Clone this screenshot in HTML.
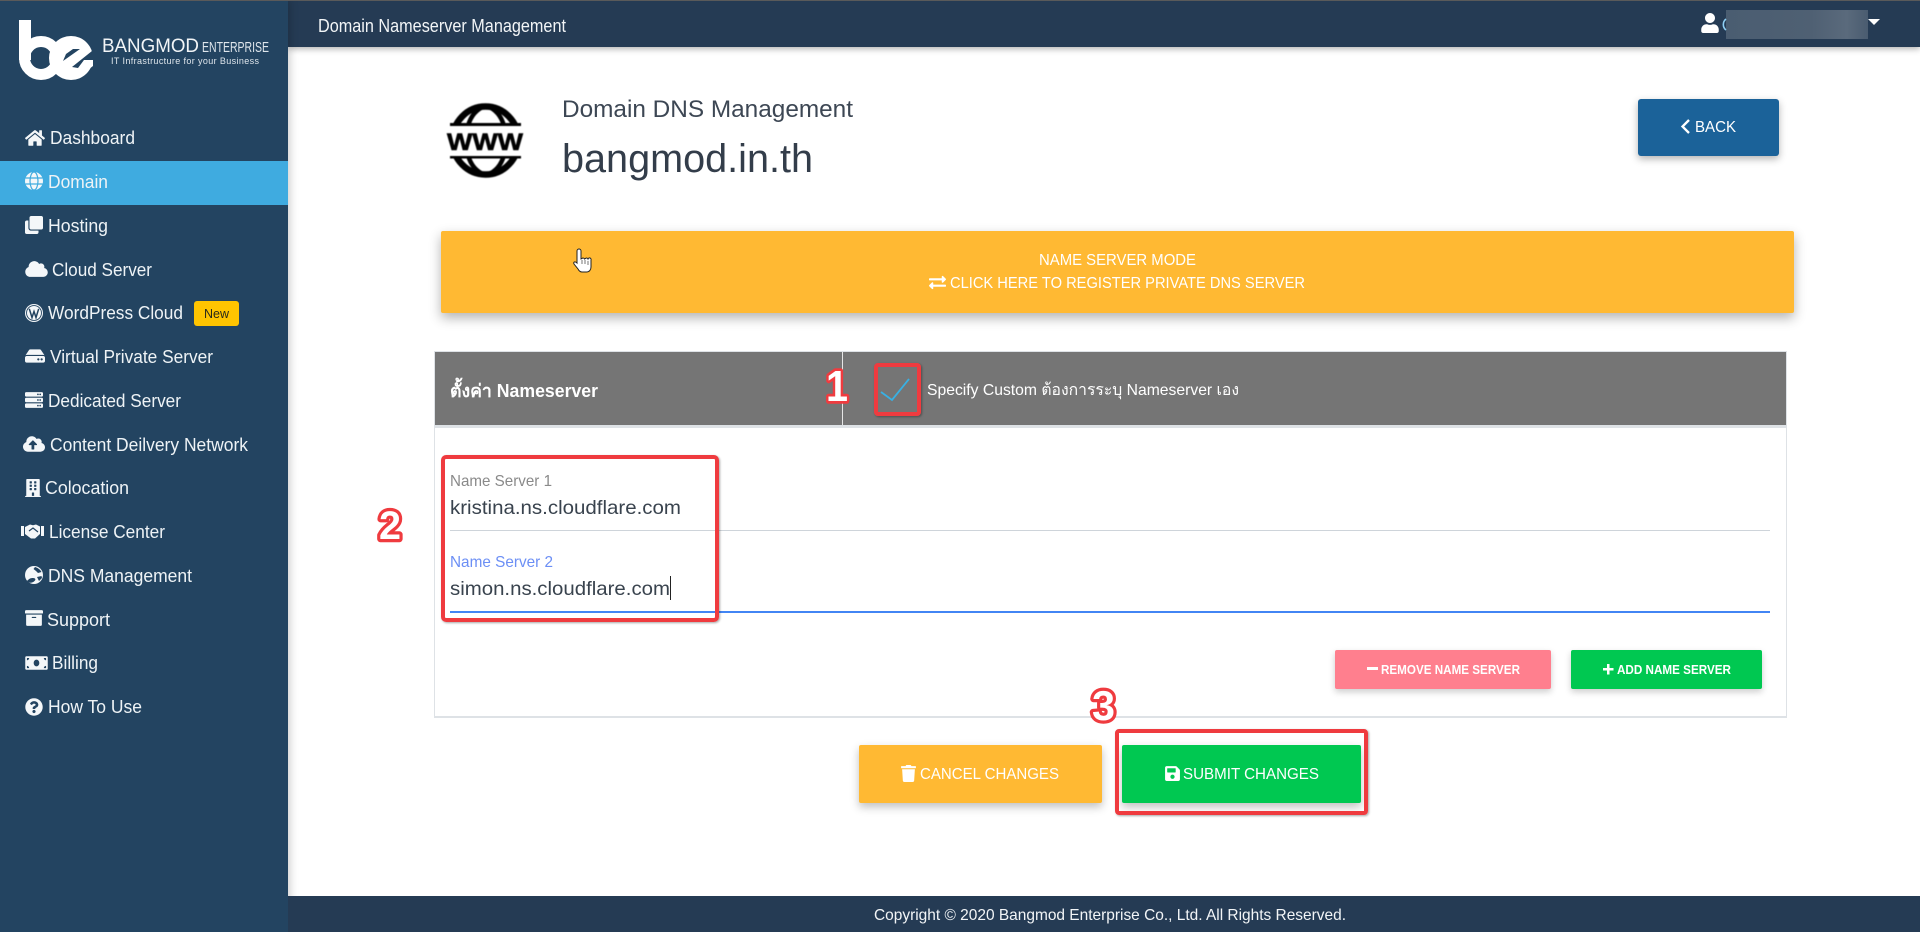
<!DOCTYPE html>
<html>
<head>
<meta charset="utf-8">
<title>Domain Nameserver Management</title>
<style>
html,body{margin:0;padding:0;width:1920px;height:932px;overflow:hidden;background:#fff}
.b{position:absolute;box-sizing:border-box}
svg.o{position:absolute;left:0;top:0;width:1920px;height:932px}
text{font-family:"Liberation Sans","Noto Sans CJK SC",sans-serif}
.n text{font-size:18px;fill:#eef3f6}
.r{border:4px solid #ef3b3f;box-shadow:1px 1px 2px rgba(0,0,0,.35)}
</style>
</head>
<body>
<div class="b" style="left:288px;top:0;width:1632px;height:47px;background:#253b54;box-shadow:0 2px 6px rgba(0,0,0,.3)"></div>
<div class="b" style="left:0;top:0;width:288px;height:932px;background:#234461;box-shadow:2px 0 8px rgba(0,0,0,.2)"></div>
<div class="b" style="left:0;top:0;width:1920px;height:1px;background:#5a5a5a"></div>
<div class="b" style="left:0;top:161px;width:288px;height:44px;background:#3fabe0"></div>
<div class="b" style="left:194px;top:301px;width:45px;height:25px;border-radius:3px;background:#ffc400"></div>
<div class="b" style="left:1726px;top:10px;width:142px;height:29px;background:linear-gradient(90deg,#4a5d71,#4f6073 60%,#5a6a7c 85%,#4a5c70)"></div>

<div class="b" style="left:1638px;top:99px;width:141px;height:57px;background:#1b6299;border-radius:3px;box-shadow:0 3px 8px rgba(0,0,0,.3)"></div>
<div class="b" style="left:441px;top:231px;width:1353px;height:82px;background:#ffb933;border-radius:2px;box-shadow:0 5px 12px rgba(0,0,0,.3)"></div>

<div class="b" style="left:434px;top:351px;width:1353px;height:367px;border:1px solid #dee2e6;border-bottom-width:2px"></div>
<div class="b" style="left:435px;top:352px;width:1351px;height:73px;background:#757575"></div>
<div class="b" style="left:435px;top:425px;width:1351px;height:3px;background:#dee2e6"></div>
<div class="b" style="left:842px;top:352px;width:1px;height:73px;background:#e6e6e6"></div>

<div class="b" style="left:450px;top:530px;width:1320px;height:1px;background:#ced4da"></div>
<div class="b" style="left:450px;top:611px;width:1320px;height:2px;background:#4285f4"></div>
<div class="b" style="left:670px;top:576px;width:1px;height:24px;background:#222"></div>

<div class="b" style="left:1335px;top:650px;width:216px;height:39px;background:#ff7f8e;border-radius:2px;box-shadow:0 3px 7px rgba(0,0,0,.2)"></div>
<div class="b" style="left:1571px;top:650px;width:191px;height:39px;background:#00c851;border-radius:2px;box-shadow:0 3px 7px rgba(0,0,0,.2)"></div>
<div class="b" style="left:859px;top:745px;width:243px;height:58px;background:#ffb933;border-radius:2px;box-shadow:0 4px 9px rgba(0,0,0,.25)"></div>
<div class="b" style="left:1122px;top:745px;width:239px;height:58px;background:#00c851;border-radius:2px;box-shadow:0 4px 9px rgba(0,0,0,.25)"></div>

<div class="b" style="left:288px;top:896px;width:1632px;height:36px;background:#253b54"></div>

<div class="b r" style="left:874px;top:363px;width:47px;height:53px;border-radius:4px"></div>
<div class="b r" style="left:441px;top:455px;width:278px;height:167px;border-radius:5px"></div>
<div class="b r" style="left:1115px;top:729px;width:253px;height:86px;border-radius:4px"></div>

<svg class="o" viewBox="0 0 1920 932" xmlns="http://www.w3.org/2000/svg">
<defs>
<clipPath id="gc"><rect x="440" y="95" width="90" height="31"/><rect x="440" y="156" width="90" height="30"/></clipPath>
<filter id="bl" x="-10%" y="-10%" width="120%" height="120%"><feGaussianBlur stdDeviation="0.6"/></filter>
</defs>
<!-- logo -->
<g>
<rect x="19" y="20" width="12" height="40" fill="#fff"/>
<circle cx="41" cy="58" r="16.5" fill="none" stroke="#fff" stroke-width="11"/>
<circle cx="71" cy="58" r="22" fill="#fff"/>
<polygon points="63,61 66,54 73,49 80,49" fill="#234461"/>
<polygon points="72,67 92,51 100,51 100,60 84,60 78,68" fill="#234461"/>
<polygon points="84,60 93,60 93,66 80,76" fill="#fff"/>
</g>
<text x="102" y="52" font-size="19.500" fill="#f2f5f7" textLength="97" lengthAdjust="spacingAndGlyphs">BANGMOD</text>
<text x="202" y="52" font-size="14.500" fill="#dfe6ec" textLength="67" lengthAdjust="spacingAndGlyphs">ENTERPRISE</text>
<text x="111" y="64" font-size="9" fill="#dfe6ec" textLength="148" lengthAdjust="spacing">IT Infrastructure for your Business</text>

<!-- nav -->
<g class="n">
<text x="50" y="144" textLength="85" lengthAdjust="spacingAndGlyphs">Dashboard</text>
<text x="48" y="188" textLength="60" lengthAdjust="spacingAndGlyphs">Domain</text>
<text x="48" y="232" textLength="60" lengthAdjust="spacingAndGlyphs">Hosting</text>
<text x="52" y="276" textLength="100" lengthAdjust="spacingAndGlyphs">Cloud Server</text>
<text x="48" y="319" textLength="135" lengthAdjust="spacingAndGlyphs">WordPress Cloud</text>
<text x="50" y="363" textLength="163" lengthAdjust="spacingAndGlyphs">Virtual Private Server</text>
<text x="48" y="407" textLength="133" lengthAdjust="spacingAndGlyphs">Dedicated Server</text>
<text x="50" y="451" textLength="198" lengthAdjust="spacingAndGlyphs">Content Deilvery Network</text>
<text x="45" y="494" textLength="84" lengthAdjust="spacingAndGlyphs">Colocation</text>
<text x="49" y="538" textLength="116" lengthAdjust="spacingAndGlyphs">License Center</text>
<text x="48" y="582" textLength="144" lengthAdjust="spacingAndGlyphs">DNS Management</text>
<text x="47" y="626" textLength="63" lengthAdjust="spacingAndGlyphs">Support</text>
<text x="52" y="669" textLength="46" lengthAdjust="spacingAndGlyphs">Billing</text>
<text x="48" y="713" textLength="94" lengthAdjust="spacingAndGlyphs">How To Use</text>
</g>
<text x="204" y="318" font-size="13" fill="#2a2a1a" textLength="25" lengthAdjust="spacingAndGlyphs">New</text>

<!-- nav icons -->
<g fill="#f4f7f9">
<svg x="25" y="129" width="20" height="18" viewBox="0 0 576 512"><path d="M280.37 148.26L96 300.11V464a16 16 0 0 0 16 16l112.06-.29a16 16 0 0 0 15.92-16V368a16 16 0 0 1 16-16h64a16 16 0 0 1 16 16v95.64a16 16 0 0 0 16 16.05L464 480a16 16 0 0 0 16-16V300L295.67 148.26a12.19 12.19 0 0 0-15.3 0zM571.6 251.47L488 182.56V44.05a12 12 0 0 0-12-12h-56a12 12 0 0 0-12 12v72.61L318.47 43a48 48 0 0 0-61 0L4.34 251.47a12 12 0 0 0-1.6 16.9l25.5 31A12 12 0 0 0 45.15 301l235.22-193.74a12.19 12.19 0 0 1 15.3 0L530.9 301a12 12 0 0 0 16.9-1.6l25.5-31a12 12 0 0 0-1.7-16.93z"/></svg>
<g>
<circle cx="34" cy="181" r="9"/>
<g fill="none" stroke="#3fabe0" stroke-width="1.200"><ellipse cx="34" cy="181" rx="4" ry="9"/><path d="M25.500 178h17M25.500 184h17"/></g>
</g>
<svg x="25" y="216" width="18" height="18" viewBox="0 0 512 512"><path d="M464 0c26.51 0 48 21.49 48 48v288c0 26.51-21.49 48-48 48H176c-26.51 0-48-21.49-48-48V48c0-26.51 21.49-48 48-48h288M176 416c-44.112 0-80-35.888-80-80V128H48c-26.51 0-48 21.49-48 48v288c0 26.51 21.49 48 48 48h288c26.51 0 48-21.49 48-48v-48H176z"/></svg>
<svg x="25" y="260" width="23" height="18" viewBox="0 0 640 512"><path d="M537.6 226.6c4.1-10.7 6.4-22.4 6.4-34.6 0-53-43-96-96-96-19.7 0-38.1 6-53.3 16.2C367 64.200 315.3 32 256 32c-88.4 0-160 71.6-160 160 0 2.7.1 5.4.2 8.1C40.2 219.8 0 273.2 0 336c0 79.5 64.5 144 144 144h368c70.7 0 128-57.3 128-128 0-61.9-44-113.6-102.4-125.4z"/></svg>
<g>
<circle cx="34" cy="313" r="9"/>
<circle cx="34" cy="313" r="7.900" fill="#234461"/>
<circle cx="34" cy="313" r="7"/>
<path d="M29.300 308.800l2.700 8.700 2-6 2 6 2.700-8.700" fill="none" stroke="#234461" stroke-width="1.500"/>
</g>
<svg x="25" y="347" width="20" height="18" viewBox="0 0 576 512"><path d="M576 304v96c0 26.51-21.49 48-48 48H48c-26.51 0-48-21.49-48-48v-96c0-26.51 21.49-48 48-48h480c26.51 0 48 21.49 48 48zm-48-80a79.557 79.557 0 0 1 30.777 6.165L462.25 85.374A48.003 48.003 0 0 0 422.311 64H153.689a48 48 0 0 0-39.938 21.374L17.223 230.165A79.557 79.557 0 0 1 48 224h480zm-48 96c-17.673 0-32 14.327-32 32s14.327 32 32 32 32-14.327 32-32-14.327-32-32-32zm-96 0c-17.673 0-32 14.327-32 32s14.327 32 32 32 32-14.327 32-32-14.327-32-32-32z"/></svg>
<svg x="25" y="391" width="18" height="18" viewBox="0 0 512 512"><path d="M480 160H32c-17.673 0-32-14.327-32-32V64c0-17.673 14.327-32 32-32h448c17.673 0 32 14.327 32 32v64c0 17.673-14.327 32-32 32zm-48-88c-13.255 0-24 10.745-24 24s10.745 24 24 24 24-10.745 24-24-10.745-24-24-24zm-64 0c-13.255 0-24 10.745-24 24s10.745 24 24 24 24-10.745 24-24-10.745-24-24-24zm112 248H32c-17.673 0-32-14.327-32-32v-64c0-17.673 14.327-32 32-32h448c17.673 0 32 14.327 32 32v64c0 17.673-14.327 32-32 32zm-48-88c-13.255 0-24 10.745-24 24s10.745 24 24 24 24-10.745 24-24-10.745-24-24-24zm-64 0c-13.255 0-24 10.745-24 24s10.745 24 24 24 24-10.745 24-24-10.745-24-24-24zm112 248H32c-17.673 0-32-14.327-32-32v-64c0-17.673 14.327-32 32-32h448c17.673 0 32 14.327 32 32v64c0 17.673-14.327 32-32 32zm-48-88c-13.255 0-24 10.745-24 24s10.745 24 24 24 24-10.745 24-24-10.745-24-24-24zm-64 0c-13.255 0-24 10.745-24 24s10.745 24 24 24 24-10.745 24-24-10.745-24-24-24z"/></svg>
<svg x="23" y="435" width="22" height="18" viewBox="0 0 640 512"><path d="M537.6 226.6c4.1-10.7 6.4-22.4 6.4-34.6 0-53-43-96-96-96-19.7 0-38.1 6-53.3 16.2C367 64.2 315.3 32 256 32c-88.4 0-160 71.6-160 160 0 2.7.1 5.4.2 8.1C40.2 219.8 0 273.2 0 336c0 79.5 64.5 144 144 144h368c70.7 0 128-57.3 128-128 0-61.9-44-113.6-102.4-125.4zM393.4 288H328v112c0 8.8-7.2 16-16 16h-48c-8.8 0-16-7.2-16-16V288h-65.4c-14.3 0-21.4-17.2-11.3-27.3l105.4-105.4c6.2-6.2 16.4-6.2 22.6 0l105.4 105.4c10.1 10.1 2.9 27.3-11.3 27.3z"/></svg>
<svg x="25" y="479" width="16" height="18" viewBox="0 0 448 512"><path d="M436 480h-20V24c0-13.255-10.745-24-24-24H56C42.745 0 32 10.745 32 24v456H12c-6.627 0-12 5.373-12 12v20h448v-20c0-6.627-5.373-12-12-12zM128 76c0-6.627 5.373-12 12-12h40c6.627 0 12 5.373 12 12v40c0 6.627-5.373 12-12 12h-40c-6.627 0-12-5.373-12-12V76zm0 96c0-6.627 5.373-12 12-12h40c6.627 0 12 5.373 12 12v40c0 6.627-5.373 12-12 12h-40c-6.627 0-12-5.373-12-12v-40zm52 148h-40c-6.627 0-12-5.373-12-12v-40c0-6.627 5.373-12 12-12h40c6.627 0 12 5.373 12 12v40c0 6.627-5.373 12-12 12zm76 160h-64v-84c0-6.627 5.373-12 12-12h40c6.627 0 12 5.373 12 12v84zm64-172c0 6.627-5.373 12-12 12h-40c-6.627 0-12-5.373-12-12v-40c0-6.627 5.373-12 12-12h40c6.627 0 12 5.373 12 12v40zm0-96c0 6.627-5.373 12-12 12h-40c-6.627 0-12-5.373-12-12v-40c0-6.627 5.373-12 12-12h40c6.627 0 12 5.373 12 12v40zm0-96c0 6.627-5.373 12-12 12h-40c-6.627 0-12-5.373-12-12V76c0-6.627 5.373-12 12-12h40c6.627 0 12 5.373 12 12v40z"/></svg>
<g>
<rect x="21" y="526" width="3" height="10"/><rect x="41" y="526" width="3" height="10"/>
<path d="M25 527l5-2.500 3 .8 3-.8 4 2v7.500l-5 4.500h-4l-6-4.500z"/>
<path d="M29 531l4-3 5 4" fill="none" stroke="#234461" stroke-width="1.200"/>
</g>
<g>
<circle cx="34" cy="575" r="9"/>
<path d="M27 581c2-2 3-3 6-3s3 2 1 3.500-5 2-7-.5zM35 567c2 .5 5 2 6.500 5l-3.500 1-2-2-2.500-2zM37 577l4.500-1 .5 2-3 3z" fill="#234461"/>
</g>
<svg x="25" y="609" width="18" height="18" viewBox="0 0 512 512"><path d="M32 448c0 17.7 14.3 32 32 32h384c17.7 0 32-14.3 32-32V160H32v288zm160-212c0-6.6 5.4-12 12-12h104c6.6 0 12 5.4 12 12v8c0 6.6-5.4 12-12 12H204c-6.6 0-12-5.4-12-12v-8zM480 32H32C14.3 32 0 46.3 0 64v48c0 8.8 7.2 16 16 16h480c8.8 0 16-7.2 16-16V64c0-17.7-14.3-32-32-32z"/></svg>
<svg x="25" y="654" width="23" height="18" viewBox="0 0 640 512"><path d="M608 64H32C14.33 64 0 78.33 0 96v320c0 17.67 14.33 32 32 32h576c17.67 0 32-14.33 32-32V96c0-17.67-14.33-32-32-32zM48 400v-64c35.35 0 64 28.65 64 64H48zm0-224v-64h64c0 35.35-28.65 64-64 64zm272 176c-44.19 0-80-42.99-80-96 0-53.02 35.82-96 80-96s80 42.98 80 96c0 53.03-35.83 96-80 96zm272 48h-64c0-35.35 28.65-64 64-64v64zm0-224c-35.35 0-64-28.65-64-64h64v64z"/></svg>
<svg x="25" y="698" width="18" height="18" viewBox="0 0 512 512"><path d="M504 256c0 136.997-111.043 248-248 248S8 392.997 8 256C8 119.083 119.043 8 256 8s248 111.083 248 248zM262.655 90c-54.497 0-89.255 22.957-116.549 63.758-3.536 5.286-2.353 12.415 2.715 16.258l34.699 26.31c5.205 3.947 12.621 3.008 16.665-2.122 17.864-22.658 30.113-35.797 57.303-35.797 20.429 0 45.698 13.148 45.698 32.958 0 14.976-12.363 22.667-32.534 33.976C247.128 238.528 216 254.941 216 296v4c0 6.627 5.373 12 12 12h56c6.627 0 12-5.373 12-12v-1.333c0-28.462 83.186-29.647 83.186-106.667 0-58.002-60.165-102-116.531-102zM256 338c-25.365 0-46 20.635-46 46 0 25.364 20.635 46 46 46s46-20.636 46-46c0-25.365-20.635-46-46-46z"/></svg>
</g>

<!-- topbar -->
<text x="318" y="32" font-size="18" fill="#f2f5f7" textLength="248" lengthAdjust="spacingAndGlyphs">Domain Nameserver Management</text>
<svg x="1701" y="13" width="18" height="20" viewBox="0 0 448 512" fill="#fff"><path d="M224 256c70.7 0 128-57.3 128-128S294.7 0 224 0 96 57.3 96 128s57.3 128 128 128zm89.6 32h-16.7c-22.2 10.2-46.9 16-72.9 16s-50.6-5.800-72.900-16h-16.700C60.200 288 0 348.200 0 422.400V464c0 26.500 21.500 48 48 48h352c26.500 0 48-21.500 48-48v-41.600c0-74.200-60.200-134.400-134.400-134.400z"/></svg>
<polygon points="1868,19 1880,19 1874,25" fill="#fff"/>
<path d="M1726 19a7 7 0 0 0 0 11" fill="none" stroke="#8fd0f5" stroke-width="1.600"/>

<!-- www icon -->
<g filter="url(#bl)">
<g clip-path="url(#gc)">
<ellipse cx="485.500" cy="140.500" rx="33" ry="34" fill="none" stroke="#000" stroke-width="6.500"/>
<path d="M468 126Q472 111 485 106M504 126Q500 111 487 106M468 155Q472 170 485 175M504 155Q500 170 487 175" fill="none" stroke="#000" stroke-width="4.500"/>
<path d="M450 124.500H521M450 157H521" fill="none" stroke="#000" stroke-width="3"/>
</g>
<text x="447" y="150" font-size="24" font-weight="700" fill="#000" stroke="#000" stroke-width=".6" textLength="76" lengthAdjust="spacingAndGlyphs">WWW</text>
</g>

<!-- titles -->
<text x="562" y="117" font-size="24" fill="#3d4754" textLength="291" lengthAdjust="spacingAndGlyphs">Domain DNS Management</text>
<text x="562" y="172" font-size="40" fill="#333d4a" textLength="251" lengthAdjust="spacingAndGlyphs">bangmod.in.th</text>

<!-- back -->
<path d="M1689 120l-6.500 6.500 6.500 6.500" fill="none" stroke="#fff" stroke-width="2.300"/>
<text x="1695" y="132" font-size="16" fill="#fff" textLength="41" lengthAdjust="spacingAndGlyphs">BACK</text>

<!-- banner -->
<text x="1039" y="265" font-size="15.500" fill="#fff" textLength="157" lengthAdjust="spacingAndGlyphs">NAME SERVER MODE</text>
<svg x="929" y="274" width="17" height="17" viewBox="0 0 512 512" fill="#fff"><path d="M0 168v-16c0-13.255 10.745-24 24-24h360V80c0-21.367 25.899-32.042 40.971-16.971l80 80c9.372 9.373 9.372 24.569 0 33.941l-80 80C409.956 271.982 384 261.456 384 240v-48H24c-13.255 0-24-10.745-24-24zm488 152H128v-48c0-21.314-25.862-32.080-40.971-16.971l-80 80c-9.372 9.373-9.372 24.569 0 33.941l80 80C102.057 463.997 128 453.437 128 432v-48h360c13.255 0 24-10.745 24-24v-16c0-13.255-10.745-24-24-24z"/></svg>
<text x="950" y="288" font-size="15.500" fill="#fff" textLength="355" lengthAdjust="spacingAndGlyphs">CLICK HERE TO REGISTER PRIVATE DNS SERVER</text>

<!-- cursor -->
<g transform="translate(-4 0)">
<path d="M581 262v-11a2 2 0 0 1 4 0v8l1-.5a1.500 1.500 0 0 1 2.500 .5l1-.5a1.500 1.500 0 0 1 2.500 .5a1.500 1.500 0 0 1 3 1v7c0 3-2 5-4 5h-5c-2 0-3-1-4-3l-4-5c-1-2 1-3 3-1z" fill="#fff" stroke="#222" stroke-width="1"/>
<path d="M586 260v4M589 260v4M592 261v4" stroke="#555" stroke-width=".8" fill="none"/>
</g>

<!-- table header -->
<text x="450" y="397" font-size="18" font-weight="700" fill="#fff" textLength="148" lengthAdjust="spacingAndGlyphs">ตั้งค่า Nameserver</text>
<text x="927" y="395" font-size="16" fill="#fff" textLength="312" lengthAdjust="spacingAndGlyphs">Specify Custom ต้องการระบุ Nameserver เอง</text>
<path d="M881 392l11 8 17-21" fill="none" stroke="#38b0e3" stroke-width="1.800"/>

<!-- form -->
<text x="450" y="486" font-size="16" fill="#8a8a8a" textLength="102" lengthAdjust="spacingAndGlyphs">Name Server 1</text>
<text x="450" y="514" font-size="19.500" fill="#39434e" textLength="231" lengthAdjust="spacingAndGlyphs">kristina.ns.cloudflare.com</text>
<text x="450" y="567" font-size="16" fill="#6c8ff5" textLength="103" lengthAdjust="spacingAndGlyphs">Name Server 2</text>
<text x="450" y="595" font-size="19.500" fill="#39434e" textLength="220" lengthAdjust="spacingAndGlyphs">simon.ns.cloudflare.com</text>

<!-- buttons -->
<rect x="1367" y="667" width="11" height="3" fill="#fff"/>
<text x="1381" y="674" font-size="12.500" font-weight="700" fill="#fff" textLength="139" lengthAdjust="spacingAndGlyphs">REMOVE NAME SERVER</text>
<path d="M1607 664h2.500v4h4v2.500h-4v4h-2.500v-4h-4v-2.500h4z" fill="#fff"/>
<text x="1617" y="674" font-size="12.500" font-weight="700" fill="#fff" textLength="114" lengthAdjust="spacingAndGlyphs">ADD NAME SERVER</text>
<svg x="901" y="765" width="15" height="17" viewBox="0 0 448 512" fill="#fff"><path d="M432 32H312l-9.400-18.700A24 24 0 0 0 281.100 0H166.800a23.720 23.720 0 0 0-21.400 13.300L136 32H16A16 16 0 0 0 0 48v32a16 16 0 0 0 16 16h416a16 16 0 0 0 16-16V48a16 16 0 0 0-16-16zM53.200 467a48 48 0 0 0 47.900 45h245.800a48 48 0 0 0 47.900-45L416 128H32z"/></svg>
<text x="920" y="779" font-size="16" fill="#fff" textLength="139" lengthAdjust="spacingAndGlyphs">CANCEL CHANGES</text>
<svg x="1165" y="765" width="15" height="17" viewBox="0 0 448 512" fill="#fff"><path d="M433.941 129.941l-83.882-83.882A48 48 0 0 0 316.118 32H48C21.490 32 0 53.490 0 80v352c0 26.510 21.490 48 48 48h352c26.510 0 48-21.490 48-48V163.882a48 48 0 0 0-14.059-33.941zM224 416c-35.346 0-64-28.654-64-64 0-35.346 28.654-64 64-64s64 28.654 64 64c0 35.346-28.654 64-64 64zm96-304.520V212c0 6.627-5.373 12-12 12H76c-6.627 0-12-5.373-12-12V108c0-6.627 5.373-12 12-12h228.520c3.183 0 6.235 1.264 8.485 3.515l3.480 3.480A11.996 11.996 0 0 1 320 111.480z"/></svg>
<text x="1183" y="779" font-size="16" fill="#fff" textLength="136" lengthAdjust="spacingAndGlyphs">SUBMIT CHANGES</text>

<!-- footer -->
<text x="874" y="920" font-size="16" fill="#f2f5f7" textLength="472" lengthAdjust="spacingAndGlyphs">Copyright © 2020 Bangmod Enterprise Co., Ltd. All Rights Reserved.</text>

<!-- annotations -->
<g font-weight="700" style="paint-order:stroke" stroke-linejoin="round">
<text x="826" y="401" font-size="44" fill="#fff" stroke="#ef3b3f" stroke-width="5.500" textLength="22" lengthAdjust="spacingAndGlyphs">1</text>
<text x="379" y="539" font-size="40" fill="#fff" stroke="#ef3b3f" stroke-width="6.500" textLength="22" lengthAdjust="spacingAndGlyphs">2</text>
<text x="1092" y="720" font-size="42" fill="#fff" stroke="#ef3b3f" stroke-width="6.500" textLength="23" lengthAdjust="spacingAndGlyphs">3</text>
</g>
</svg>
</body>
</html>
